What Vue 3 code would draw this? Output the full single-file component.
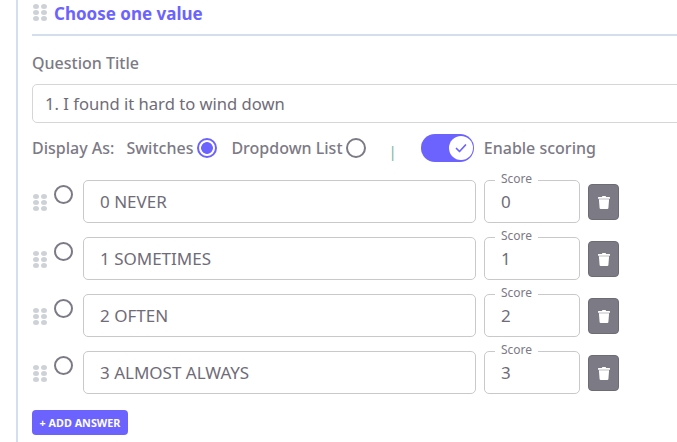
<script setup>
import { ref } from 'vue'

const answers = ref([
  { label: '0 NEVER', score: 0 },
  { label: '1 SOMETIMES', score: 1 },
  { label: '2 OFTEN', score: 2 },
  { label: '3 ALMOST ALWAYS', score: 3 },
])
const dots = [1, 2, 3, 4, 5, 6]
</script>

<template>
  <div class="page">
    <div class="panel">
      <div class="head">
        <div class="grip"><i v-for="d in dots" :key="d"></i></div>
        <span class="head-title">Choose one value</span>
      </div>

      <div class="field-label">Question Title</div>
      <div class="title-input">1. I found it hard to wind down</div>

      <div class="display-row">
        <span class="display-as">Display As:</span>
        <span class="opt">Switches</span>
        <span class="radio on"></span>
        <span class="opt second">Dropdown List</span>
        <span class="radio"></span>
        <span class="sep">|</span>
        <span class="toggle">
          <span class="knob">
            <svg width="14" height="14" viewBox="0 0 14 14"><path d="M2.500 7.500l3 3 6-6.500" fill="none" stroke="#6c63ff" stroke-width="1.700" stroke-linecap="round" stroke-linejoin="round" /></svg>
          </span>
        </span>
        <span class="enable">Enable scoring</span>
      </div>

      <div class="answer" v-for="a in answers" :key="a.label">
        <div class="grip low"><i v-for="d in dots" :key="d"></i></div>
        <span class="radio answer-radio"></span>
        <div class="answer-input">{{ a.label }}</div>
        <div class="score">
          <span class="score-label">Score</span>
          {{ a.score }}
        </div>
        <button class="trash">
          <svg width="12" height="13" viewBox="0 0 12 13"><path d="M4.400 0h3.200l.5 1H11.400a.6.6 0 0 1 .6.6v1.100H0V1.600a.6.6 0 0 1 .6-.6h3.300zM.9 3.200h10.200l-.7 8.700a1.200 1.200 0 0 1-1.200 1.100H2.800a1.200 1.200 0 0 1-1.200-1.100z" fill="#fff" /></svg>
        </button>
      </div>

      <button class="add">+ ADD ANSWER</button>
    </div>
  </div>
</template>

<style scoped>
.page {
  width: 677px;
  height: 442px;
  overflow: hidden;
  background: #fff;
  padding-left: 16px;
  box-sizing: border-box;
  font-family: "Noto Sans", "Open Sans", sans-serif;
  color: #7c7a85;
}
.panel {
  border-left: 2px solid #d3dfec;
  padding-left: 14px;
  height: 442px;
  box-sizing: border-box;
  width: 700px;
}
.head {
  display: flex;
  align-items: center;
  gap: 8px;
  border-bottom: 2px solid #d3dfec;
  padding-bottom: 5px;
  height: 29px;
}
.grip {
  display: grid;
  grid-template-columns: 6px 6px;
  gap: 1px 2px;
  width: 14px;
  margin-left: 1px;
  margin-top: -4px;
}
.grip i {
  display: block;
  width: 6px;
  height: 5px;
  border-radius: 50%;
  background: #ced2d7;
}
.grip.low {
  margin: 14px 0 0 1px;
}
.head-title {
  font-size: 17px;
  font-weight: 700;
  color: #6c63ff;
  margin-top: -3px;
  margin-left: -1px;
}
.field-label {
  font-size: 16px;
  font-weight: 500;
  margin-top: 17px;
  line-height: 20px;
}
.title-input {
  margin-top: 11px;
  height: 39px;
  box-sizing: border-box;
  border: 1px solid #d6d6d8;
  border-radius: 5px;
  padding-left: 12px;
  line-height: 37px;
  font-size: 16.6px;
  color: #6f6c78;
}
.display-row {
  display: flex;
  align-items: center;
  height: 30px;
  margin-top: 10px;
  font-size: 16px;
  font-weight: 500;
  margin-bottom: 17px;
}
.display-as,
.opt,
.enable {
  margin-top: -1px;
}
.opt { margin-left: 12px; }
.opt.second { margin-left: 14px; }
.radio {
  display: inline-block;
  box-sizing: border-box;
  width: 20px;
  height: 20px;
  border: 2px solid #7c7a85;
  border-radius: 50%;
  margin-left: 3px;
  flex: none;
}
.radio.on {
  border-color: #6c63ff;
  background: radial-gradient(circle, #6c63ff 0 5.5px, #fff 6.2px);
  margin-left: 4px;
}
.sep {
  margin-left: 23px;
  margin-top: 6px;
  color: #7fb5a0;
  font-weight: 400;
  font-size: 15px;
}
.toggle {
  display: flex;
  align-items: center;
  justify-content: flex-end;
  width: 53px;
  height: 28px;
  margin-left: 24px;
  border-radius: 14px;
  background: #6c63ff;
}
.knob {
  display: flex;
  align-items: center;
  justify-content: center;
  width: 24px;
  height: 24px;
  margin-right: 1px;
  border-radius: 50%;
  background: #fff;
}
.enable { margin-left: 10px; }
.answer {
  display: flex;
  align-items: flex-start;
  height: 43px;
  margin-bottom: 14px;
}
.answer-radio {
  width: 19px;
  height: 19px;
  margin: 5px 0 0 7px;
}
.answer-input {
  width: 393px;
  height: 43px;
  box-sizing: border-box;
  margin-left: 10px;
  border: 1px solid #c9c9cb;
  border-radius: 5px;
  padding-left: 16px;
  line-height: 41px;
  font-size: 17px;
  color: #6f6c78;
}
.score {
  position: relative;
  width: 96px;
  height: 43px;
  box-sizing: border-box;
  margin-left: 8px;
  border: 1px solid #c9c9cb;
  border-radius: 5px;
  padding-left: 16px;
  line-height: 41px;
  font-size: 17px;
  color: #6f6c78;
}
.score-label {
  position: absolute;
  top: -10px;
  left: 10px;
  padding: 0 6px;
  background: #fff;
  font-size: 12px;
  line-height: 15px;
  color: #7c7a85;
}
.trash {
  display: flex;
  align-items: center;
  justify-content: center;
  width: 31px;
  height: 36px;
  margin: 4px 0 0 8px;
  padding: 0;
  border: 1px solid #6d6c75;
  border-radius: 4px;
  background: #7c7a85;
}
.add {
  display: block;
  width: 96px;
  height: 25px;
  margin-top: 16px;
  padding: 0;
  border: 0;
  border-radius: 4px;
  background: #6c63ff;
  color: #fff;
  font-family: inherit;
  font-size: 10.8px;
  font-weight: 700;
}
</style>
